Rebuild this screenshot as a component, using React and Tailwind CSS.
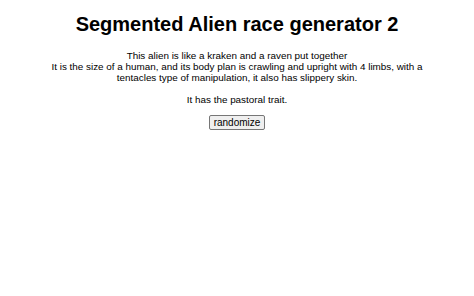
export default function App() {
  return (
    <div className="w-[474px] h-[296px] bg-white text-black text-center font-['Liberation_Sans',Arial,sans-serif]">
      <h1 className="pt-[12px] text-[20px] leading-[24px] font-bold">Segmented Alien race generator 2</h1>
      <div className="mt-[14px] text-[9.9px] leading-[11px]">
        <p>This alien is like a kraken and a raven put together</p>
        <p>It is the size of a human, and its body plan is crawling and upright with 4 limbs, with a</p>
        <p>tentacles type of manipulation, it also has slippery skin.</p>
        <p className="mt-[11px]">It has the pastoral trait.</p>
      </div>
      <button className="mt-[10px] px-[4px] h-[15px] text-[10px] leading-[11px] bg-[#efefef] border border-[#767676] rounded-[2px]">
        randomize
      </button>
    </div>
  );
}
